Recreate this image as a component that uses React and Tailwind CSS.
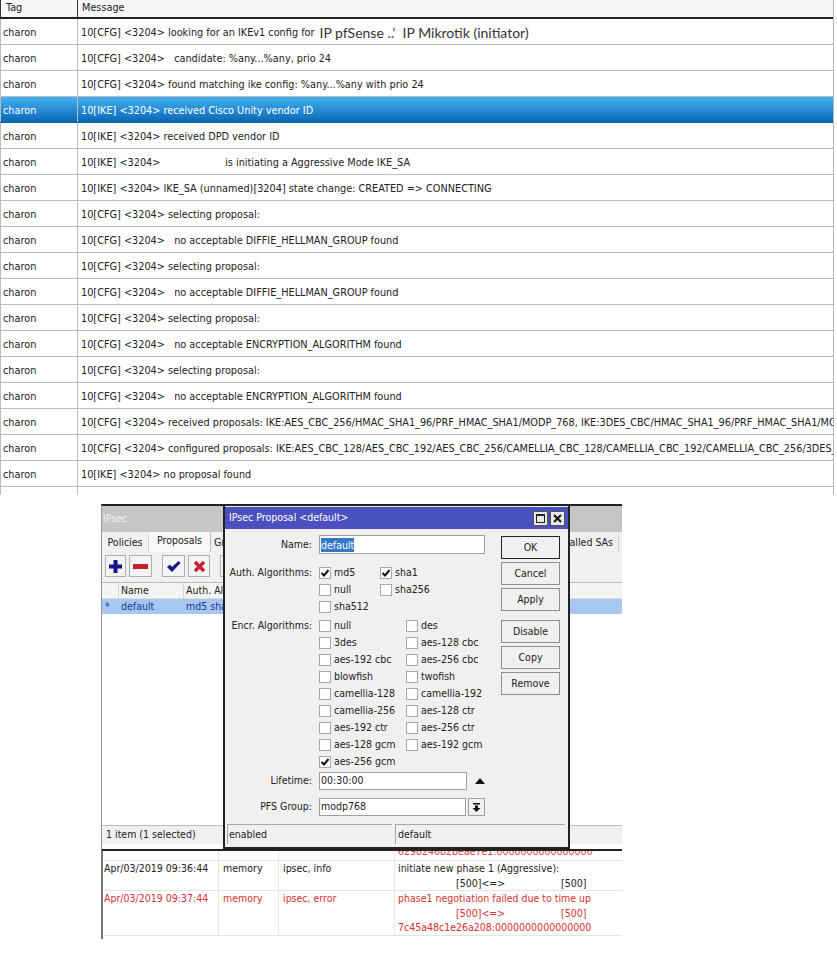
import React from 'react';

const logRows = [
  { msg: '10[CFG] <3204> looking for an IKEv1 config for', note: true },
  { msg: '10[CFG] <3204>   candidate: %any...%any, prio 24' },
  { msg: '10[CFG] <3204> found matching ike config: %any...%any with prio 24' },
  { msg: '10[IKE] <3204> received Cisco Unity vendor ID', selected: true },
  { msg: '10[IKE] <3204> received DPD vendor ID' },
  { msg: '10[IKE] <3204>                     is initiating a Aggressive Mode IKE_SA' },
  { msg: '10[IKE] <3204> IKE_SA (unnamed)[3204] state change: CREATED => CONNECTING' },
  { msg: '10[CFG] <3204> selecting proposal:' },
  { msg: '10[CFG] <3204>   no acceptable DIFFIE_HELLMAN_GROUP found' },
  { msg: '10[CFG] <3204> selecting proposal:' },
  { msg: '10[CFG] <3204>   no acceptable DIFFIE_HELLMAN_GROUP found' },
  { msg: '10[CFG] <3204> selecting proposal:' },
  { msg: '10[CFG] <3204>   no acceptable ENCRYPTION_ALGORITHM found' },
  { msg: '10[CFG] <3204> selecting proposal:' },
  { msg: '10[CFG] <3204>   no acceptable ENCRYPTION_ALGORITHM found' },
  { msg: '10[CFG] <3204> received proposals: IKE:AES_CBC_256/HMAC_SHA1_96/PRF_HMAC_SHA1/MODP_768, IKE:3DES_CBC/HMAC_SHA1_96/PRF_HMAC_SHA1/MODP_768' },
  { msg: '10[CFG] <3204> configured proposals: IKE:AES_CBC_128/AES_CBC_192/AES_CBC_256/CAMELLIA_CBC_128/CAMELLIA_CBC_192/CAMELLIA_CBC_256/3DES_CBC' },
  { msg: '10[IKE] <3204> no proposal found' },
];

const encrRows = [
  ['null', 'des'],
  ['3des', 'aes-128 cbc'],
  ['aes-192 cbc', 'aes-256 cbc'],
  ['blowfish', 'twofish'],
  ['camellia-128', 'camellia-192'],
  ['camellia-256', 'aes-128 ctr'],
  ['aes-192 ctr', 'aes-256 ctr'],
  ['aes-128 gcm', 'aes-192 gcm'],
  ['aes-256 gcm'],
];

const Check = ({ label, checked }) => (
  <div className="flex items-center gap-[3px] h-[17px] whitespace-nowrap">
    <span className="w-[12px] h-[12px] border border-[#a8a8a8] bg-white flex items-center justify-center shrink-0">
      {checked && (
        <svg width="10" height="10" viewBox="0 0 10 10">
          <path d="M1.5 5 L4 7.5 L8.5 2" fill="none" stroke="#111" strokeWidth="2" />
        </svg>
      )}
    </span>
    <span>{label}</span>
  </div>
);

const DlgButton = ({ label, primary }) => (
  <div className={`h-[23px] w-[59px] flex items-center justify-center bg-[#f0f0f0] border ${primary ? 'border-[#222]' : 'border-[#8f8f8f]'}`}>
    {label}
  </div>
);

const FieldLabel = ({ children }) => (
  <div className="w-[87px] text-right shrink-0 whitespace-nowrap">{children}</div>
);

const ToolButton = ({ className, children }) => (
  <div className={`h-[22px] border border-[#b0b0b0] bg-[#f4f4f4] flex items-center justify-center ${className}`}>
    {children}
  </div>
);

const ProposalDialog = () => (
  <div className="absolute left-[121px] top-[-1px] w-[347px] h-[344px] bg-[#f0f0f0] border-2 border-[#222] border-t-[1px] flex flex-col text-[#222]">
    <div className="h-[22px] mt-[1px] bg-[#4b50bf] flex items-center justify-between pl-[4px] pr-[3px] text-white shrink-0">
      <span>IPsec Proposal &lt;default&gt;</span>
      <div className="flex gap-[2px]">
        <span className="w-[15px] h-[15px] bg-[#e8e8e8] border border-[#555] flex items-center justify-center">
          <span className="w-[9px] h-[9px] border border-[#222] border-t-2" />
        </span>
        <span className="w-[15px] h-[15px] bg-[#e8e8e8] border border-[#555] flex items-center justify-center">
          <svg width="9" height="9" viewBox="0 0 9 9">
            <path d="M1 1 L8 8 M8 1 L1 8" stroke="#111" strokeWidth="2" />
          </svg>
        </span>
      </div>
    </div>

    <div className="flex flex-1">
      <div className="w-[276px] pt-[6px] shrink-0">
        <div className="flex items-center gap-[7px] h-[19px]">
          <FieldLabel>Name:</FieldLabel>
          <div className="w-[166px] h-[19px] bg-white border border-[#a0a0a0] flex items-center pl-[1px]">
            <span className="bg-[#3478c8] text-white leading-[14px]">default</span>
          </div>
        </div>

        <div className="flex gap-[7px] mt-[10px]">
          <FieldLabel><span className="leading-[17px] block">Auth. Algorithms:</span></FieldLabel>
          <div className="grid grid-cols-[61px_1fr]">
            <Check label="md5" checked />
            <Check label="sha1" checked />
            <Check label="null" />
            <Check label="sha256" />
            <Check label="sha512" />
          </div>
        </div>

        <div className="flex gap-[7px] mt-[2px]">
          <FieldLabel><span className="leading-[17px] block">Encr. Algorithms:</span></FieldLabel>
          <div className="grid grid-cols-[87px_1fr]">
            {encrRows.map((row) =>
              row.map((name) => <Check key={name} label={name} checked={name === 'aes-256 gcm'} />)
            )}
          </div>
        </div>

        <div className="flex items-center gap-[7px] h-[18px] mt-[2px]">
          <FieldLabel>Lifetime:</FieldLabel>
          <div className="w-[148px] h-[18px] bg-white border border-[#a0a0a0] flex items-center pl-[1px]">00:30:00</div>
          <svg width="10" height="6" viewBox="0 0 10 6" className="ml-[1px]">
            <path d="M0 6 L5 0 L10 6 Z" fill="#111" />
          </svg>
        </div>

        <div className="flex items-center gap-[7px] h-[18px] mt-[8px]">
          <FieldLabel>PFS Group:</FieldLabel>
          <div className="w-[147px] h-[18px] bg-white border border-[#a0a0a0] flex items-center pl-[1px]">modp768</div>
          <div className="w-[17px] h-[18px] -ml-[5px] border border-[#a0a0a0] flex items-center justify-center">
            <svg width="9" height="9" viewBox="0 0 9 9">
              <path d="M1 0 H8 V1.5 H1 Z M3 2.5 H6 V5 H8.5 L4.5 9 L0.5 5 H3 Z" fill="#111" />
            </svg>
          </div>
        </div>
      </div>

      <div className="pt-[7px] flex flex-col gap-[3px]">
        <DlgButton label="OK" primary />
        <DlgButton label="Cancel" />
        <DlgButton label="Apply" />
        <div className="h-[3px]" />
        <DlgButton label="Disable" />
        <DlgButton label="Copy" />
        <DlgButton label="Remove" />
      </div>
    </div>

    <div className="flex h-[20px] mb-[3px] mx-[2px] gap-[3px] shrink-0">
      <div className="w-[165px] border-l border-t border-[#a8a8a8] flex items-center pl-[1px]">enabled</div>
      <div className="w-[170px] border-l border-t border-[#a8a8a8] flex items-center pl-[2px]">default</div>
    </div>
  </div>
);

const IpsecWindow = () => (
  <div className="relative w-[521px] ml-[101px] mt-[9px] h-[345px] bg-white border-t-2 border-t-[#222] border-l border-l-[#999] flex flex-col text-[#222]">
    <div className="h-[26px] bg-[#c6c6c6] text-[#f2f2f2] flex items-center pl-[1px] shrink-0">IPsec</div>
    <div className="h-[20px] bg-[#f0f0f0] flex items-end shrink-0 relative">
      <div className="h-[18px] w-[47px] border-r border-[#d0d0d0] flex items-center justify-center">Policies</div>
      <div className="h-[20px] w-[62px] bg-[#f8f8f8] border-r border-[#bbb] flex items-start justify-center pt-[1px]">Proposals</div>
      <div className="h-[18px] pl-[3px] flex items-center">Groups</div>
      <div className="ml-auto h-[18px] pr-[5px] flex items-center border-r border-[#ccc] mr-[3px]">Installed SAs</div>
    </div>
    <div className="h-[31px] bg-[#f0f0f0] flex items-start gap-[3px] pl-[3px] pt-[3px] border-b border-[#bbb] shrink-0">
      <ToolButton className="w-[21px]">
        <svg width="15" height="15" viewBox="0 0 15 15"><path d="M5.5 1 H9.5 V5.5 H14 V9.5 H9.5 V14 H5.5 V9.5 H1 V5.5 H5.5 Z" fill="#14148c" /></svg>
      </ToolButton>
      <ToolButton className="w-[23px]">
        <svg width="15" height="5" viewBox="0 0 15 5"><rect x="0" y="0" width="15" height="5" fill="#c8202a" /></svg>
      </ToolButton>
      <ToolButton className="w-[23px] ml-[7px]">
        <svg width="15" height="13" viewBox="0 0 15 13"><path d="M1 7 L4 4.5 L6 7 L12.5 1 L14.5 3 L6 12 Z" fill="#14148c" /></svg>
      </ToolButton>
      <ToolButton className="w-[22px]">
        <svg width="13" height="13" viewBox="0 0 13 13"><path d="M2 2 L11 11 M11 2 L2 11" stroke="#c8202a" strokeWidth="3.4" /></svg>
      </ToolButton>
      <ToolButton className="w-[22px] ml-[7px]" />
    </div>
    <div className="h-[16px] bg-[#f4f4f4] border-b border-[#ddd] flex items-center shrink-0">
      <div className="w-[17px] h-full border-r border-[#d4d4d4]" />
      <div className="w-[65px] h-full border-r border-[#d4d4d4] flex items-center pl-[2px]">Name</div>
      <div className="pl-[2px]">Auth. Algorithms</div>
    </div>
    <div className="h-[15px] bg-[#a6c8ee] text-[#2433a8] flex items-center shrink-0">
      <div className="w-[17px] pl-[3px]">*</div>
      <div className="w-[65px] pl-[2px]">default</div>
      <div className="pl-[2px] whitespace-nowrap">md5 sha1</div>
    </div>
    <div className="flex-1" />
    <div className="h-[19px] mb-[5px] bg-[#f0f0f0] border-t border-[#bbb] flex items-center pl-[4px] shrink-0">1 item (1 selected)</div>
    <ProposalDialog />
  </div>
);

const BottomLog = () => (
  <div className="w-[521px] ml-[101px] h-[90px] border-t-2 border-t-[#222] border-l-2 border-l-[#777] overflow-hidden text-[#222]">
    <div className="h-[10px] flex border-b border-[#e4e4e4] overflow-hidden">
      <div className="w-[116px] border-r border-[#e8e8e8]" />
      <div className="w-[60px] border-r border-[#e8e8e8]" />
      <div className="w-[116px] border-r border-[#e8e8e8]" />
      <div className="pl-[3px] -mt-[7px] text-[#e04040]">6298246b2beae7e1:0000000000000000</div>
    </div>
    <div className="h-[30px] flex border-b border-[#e4e4e4] leading-[14.5px]">
      <div className="w-[116px] pl-[1px] border-r border-[#e8e8e8]">Apr/03/2019 09:36:44</div>
      <div className="w-[60px] pl-[4px] border-r border-[#e8e8e8]">memory</div>
      <div className="w-[116px] pl-[4px] border-r border-[#e8e8e8]">ipsec, info</div>
      <div className="pl-[3px]">
        <div>initiate new phase 1 (Aggressive):</div>
        <div className="flex"><span className="ml-[58px] w-[105px]">[500]&lt;=&gt;</span><span>[500]</span></div>
      </div>
    </div>
    <div className="h-[45px] flex border-b border-[#e4e4e4] leading-[14.5px] text-[#d83030]">
      <div className="w-[116px] pl-[1px] border-r border-[#e8e8e8]">Apr/03/2019 09:37:44</div>
      <div className="w-[60px] pl-[4px] border-r border-[#e8e8e8]">memory</div>
      <div className="w-[116px] pl-[4px] border-r border-[#e8e8e8]">ipsec, error</div>
      <div className="pl-[3px]">
        <div>phase1 negotiation failed due to time up</div>
        <div className="flex"><span className="ml-[58px] w-[105px]">[500]&lt;=&gt;</span><span>[500]</span></div>
        <div>7c45a48c1e26a208:0000000000000000</div>
      </div>
    </div>
    <div className="flex leading-[14.5px] text-[#888]">
      <div className="w-[116px] pl-[1px]">Apr/03/2019 09:37:44</div>
      <div className="w-[60px] pl-[4px]">memory</div>
      <div className="w-[116px] pl-[4px]">ipsec, info</div>
      <div className="pl-[3px]">initiate new phase 1 (Aggressive):</div>
    </div>
  </div>
);

export default function App() {
  return (
    <div className="w-[837px] h-[978px] bg-white overflow-hidden text-[10.5px] font-['DejaVu_Sans_Condensed','DejaVu_Sans','Liberation_Sans',sans-serif]">
      <div className="w-[834px] border-r border-[#b8b8b8] text-[#222] text-[10.8px]">
        <div className="h-[19px] flex bg-[#f6f6f6] border-b-2 border-[#222]">
          <div className="w-[78px] border-l border-r border-[#333] pl-[5px] leading-[15px]">Tag</div>
          <div className="pl-[4px] leading-[15px]">Message</div>
        </div>
        {logRows.map((row, i) => (
          <div
            key={i}
            className={`h-[26px] flex items-center whitespace-pre overflow-hidden border-b ${
              row.selected
                ? 'text-white border-[#0a5fa8] bg-gradient-to-b from-[#43b2f2] to-[#0866b4]'
                : 'border-[#bcbcbc]'
            }`}
          >
            <div className="w-[78px] h-full border-l border-r border-[#bcbcbc] pl-[2px] pt-[3px] flex items-center shrink-0">charon</div>
            <div className="pl-[3px] pt-[3px] flex items-center">
              {row.msg}
              {row.note && (
                <span className="ml-[5px] -mt-[2px] text-[14px] font-['Lato',sans-serif] text-[#333]">IP pfSense ..&apos;  IP Mikrotik (initiator)</span>
              )}
            </div>
          </div>
        ))}
        <div className="h-[8px] flex">
          <div className="w-[78px] h-full border-l border-r border-[#bcbcbc]" />
        </div>
      </div>
      <IpsecWindow />
      <BottomLog />
    </div>
  );
}
